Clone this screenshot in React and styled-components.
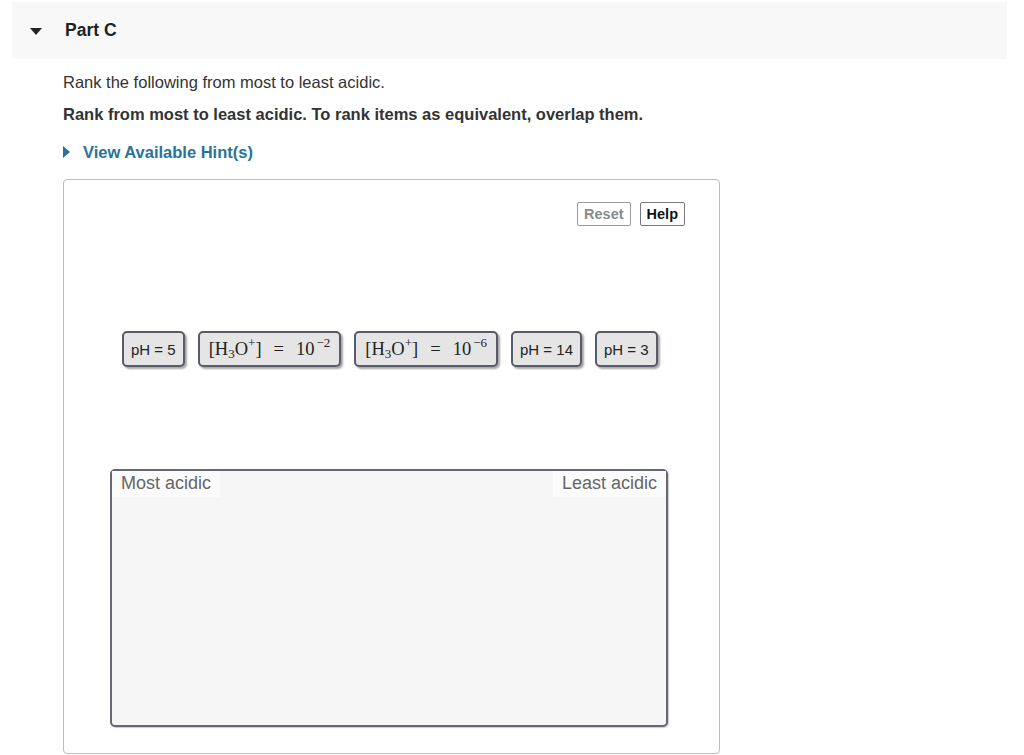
import React from "react";
import styled, { createGlobalStyle } from "styled-components";

const Global = createGlobalStyle`
  html, body { margin: 0; padding: 0; background: #fff; }
  body { font-family: "Helvetica Neue", "Liberation Sans", Arial, sans-serif; color: #333; }
`;

const Page = styled.div`
  width: 1024px;
  height: 755px;
  overflow: hidden;
  padding-top: 2px;
  box-sizing: border-box;
`;

const Header = styled.div`
  margin-left: 12px;
  width: 995px;
  height: 57px;
  background: #f8f8f8;
  display: flex;
  align-items: center;
  box-sizing: border-box;
  padding-left: 18px;
`;

const DownTri = styled.span`
  width: 0;
  height: 0;
  border-left: 6.5px solid transparent;
  border-right: 6.5px solid transparent;
  border-top: 7px solid #222;
  margin-top: 1px;
`;

const Title = styled.h2`
  margin: 0 0 0 23px;
  font-size: 17.5px;
  font-weight: 700;
  color: #222;
`;

const Body = styled.div`
  padding-left: 63px;
`;

const Para = styled.p`
  margin: 0;
  font-size: 16.5px;
  line-height: 20px;
  color: #333;
  font-weight: ${(p) => (p.$bold ? 700 : 400)};
  padding-top: ${(p) => p.$top}px;
`;

const Hint = styled.div`
  display: flex;
  align-items: center;
  margin-top: 18px;
  height: 20px;
  color: #2a7398;
  font-weight: 700;
  font-size: 16.5px;
`;

const RightTri = styled.span`
  width: 0;
  height: 0;
  border-top: 6px solid transparent;
  border-bottom: 6px solid transparent;
  border-left: 7px solid #2a7398;
  margin-right: 13px;
`;

const Box = styled.div`
  margin-top: 17px;
  width: 657px;
  height: 575px;
  box-sizing: border-box;
  border: 1px solid #bdbdbd;
  border-radius: 4px;
  padding: 22px 34px 0 0;
  display: flex;
  flex-direction: column;
`;

const Toolbar = styled.div`
  display: flex;
  justify-content: flex-end;
  gap: 9px;
`;

const Btn = styled.button`
  height: 24px;
  box-sizing: border-box;
  padding: 0 6px;
  background: #fff;
  border: 1px solid ${(p) => (p.$muted ? "#999" : "#777")};
  border-radius: 2px;
  font-family: inherit;
  font-size: 14.5px;
  font-weight: 700;
  color: ${(p) => (p.$muted ? "#8a8a8a" : "#111")};
`;

const Items = styled.div`
  display: flex;
  gap: 13px;
  margin-top: 105px;
  margin-left: 58px;
`;

const Item = styled.div`
  height: 36px;
  box-sizing: border-box;
  padding: 0 ${(p) => (p.$math ? 9 : 7)}px;
  display: flex;
  align-items: center;
  background: #e5e5e5;
  border: 2px solid #585c68;
  border-radius: 5px;
  box-shadow: 2px 2px 2px rgba(0, 0, 0, 0.35);
  font-size: 15px;
  color: #222;
  white-space: nowrap;
`;

const Math = styled.span`
  display: inline-block;
  font-family: "Liberation Serif", "DejaVu Serif", serif;
  font-size: 18.5px;
  line-height: 20px;
  color: #222;
  white-space: nowrap;
`;

const Sub = styled.span`
  font-size: 13px;
  vertical-align: -3px;
  line-height: 0;
`;

const Sup = styled.span`
  font-size: 13px;
  vertical-align: 8px;
  line-height: 0;
  margin-left: ${(p) => p.$gap || 0}px;
`;

const Eq = styled.span`
  margin: 0 12px;
`;

const RankArea = styled.div`
  margin-top: 102px;
  margin-left: 46px;
  width: 558px;
  height: 258px;
  box-sizing: border-box;
  border: 2px solid #666875;
  border-radius: 5px;
  background: #f6f6f7;
  display: flex;
  justify-content: space-between;
  align-items: flex-start;
  box-shadow: 1px 1px 1px rgba(0, 0, 0, 0.2);
`;

const Label = styled.div`
  background: #fbfbfb;
  font-size: 18px;
  color: #666;
  padding: 2px 9px 4px 9px;
  line-height: 20px;
`;

const H3O = ({ exp }) => (
  <Math>
    [H<Sub>3</Sub>O<Sup>+</Sup>]<Eq>=</Eq>10<Sup $gap={2}>−{exp}</Sup>
  </Math>
);

export default function App() {
  return (
    <Page>
      <Global />
      <Header>
        <DownTri />
        <Title>Part C</Title>
      </Header>
      <Body>
        <Para $top={13}>Rank the following from most to least acidic.</Para>
        <Para $bold $top={12}>
          Rank from most to least acidic. To rank items as equivalent, overlap them.
        </Para>
        <Hint>
          <RightTri />
          View Available Hint(s)
        </Hint>
        <Box>
          <Toolbar>
            <Btn $muted>Reset</Btn>
            <Btn>Help</Btn>
          </Toolbar>
          <Items>
            <Item>pH = 5</Item>
            <Item $math>
              <H3O exp="2" />
            </Item>
            <Item $math>
              <H3O exp="6" />
            </Item>
            <Item>pH = 14</Item>
            <Item>pH = 3</Item>
          </Items>
          <RankArea>
            <Label>Most acidic</Label>
            <Label>Least acidic</Label>
          </RankArea>
        </Box>
      </Body>
    </Page>
  );
}
